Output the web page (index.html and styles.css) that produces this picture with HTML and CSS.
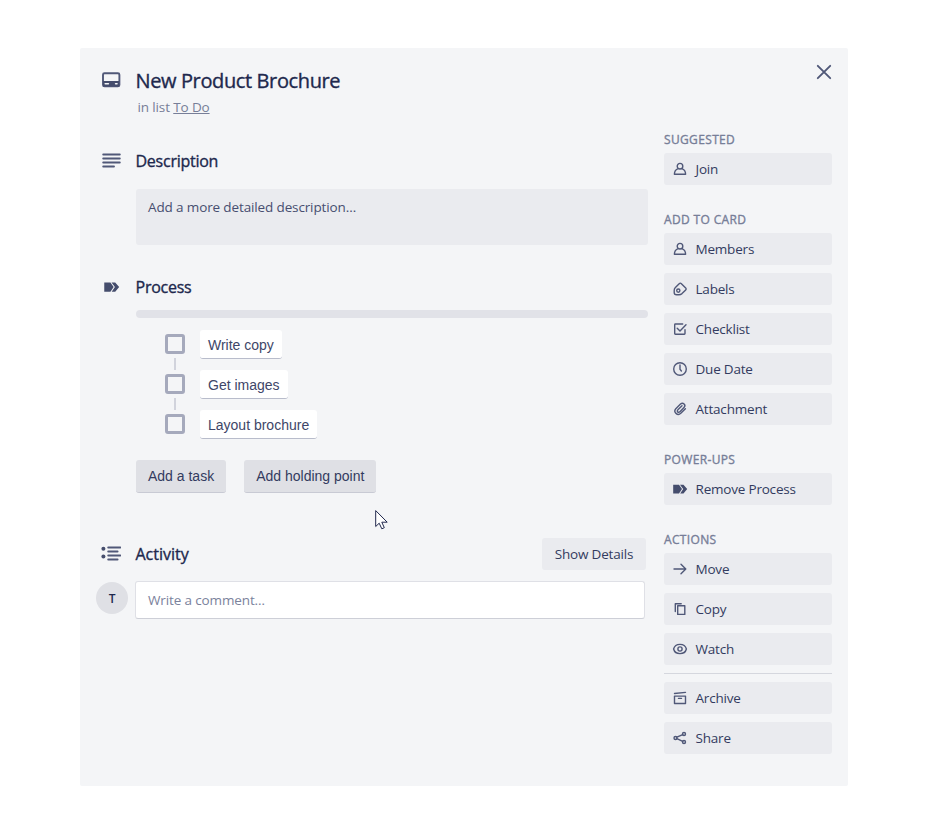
FILE: index.html
```html
<!DOCTYPE html>
<html lang="en">
<head>
  <meta charset="UTF-8">
  <meta name="viewport" content="width=device-width, initial-scale=1.0">
  <title>New Product Brochure</title>
  <link rel="stylesheet" href="styles.css">
</head>
<body>
  <!-- shared icons -->
  <svg class="sprite" width="0" height="0">
    <symbol id="person" viewBox="0 0 16 16">
      <circle cx="8" cy="5.2" r="2.8"/>
      <path d="M6.2 7.6C3.6 8.5 2.4 10.3 2.4 13.3H13.6C13.6 10.3 12.4 8.5 9.8 7.6"/>
    </symbol>
    <symbol id="process" viewBox="0 0 16 16">
      <path class="solid" d="M1.2 3.8H7L10 8L7 12.4H1.2Z"/>
      <path class="solid" d="M8 3.8H11.5L15.2 8L11.5 12.4H8.2L11.2 8Z"/>
    </symbol>
  </svg>

  <div class="card">
    <main class="main">
      <header class="row title-row">
        <svg class="icon" viewBox="0 0 20 20"><rect x="2" y="3.2" width="16.4" height="13.2" rx="1.5"/><path class="solid" d="M2 11H18V16.4H2Z"/><path class="light" d="M4.2 13.8H7.4M14.6 13.8H16"/></svg>
        <div>
          <h1>New Product Brochure</h1>
          <p class="in-list">in list <a>To Do</a></p>
        </div>
      </header>

      <section class="description">
        <div class="row">
          <svg class="icon" viewBox="0 0 20 20"><path d="M2.2 3.5H18.8M2.2 7.5H18.8M2.2 11.5H18.8M2.2 15.5H13"/></svg>
          <h2>Description</h2>
        </div>
        <div class="desc-box">Add a more detailed description…</div>
      </section>

      <section class="process">
        <div class="row">
          <svg class="icon process-icon"><use href="#process"/></svg>
          <h2>Process</h2>
        </div>
        <div class="progress"></div>
        <ul class="tasks">
          <li><span class="box"></span><span class="task">Write copy</span></li>
          <li><span class="box"></span><span class="task">Get images</span></li>
          <li><span class="box"></span><span class="task">Layout brochure</span></li>
        </ul>
        <div class="buttons">
          <button class="task-btn">Add a task</button>
          <button class="task-btn">Add holding point</button>
        </div>
      </section>

      <section class="activity">
        <div class="row">
          <svg class="icon" viewBox="0 0 20 20"><circle class="solid" cx="2.4" cy="4.7" r="2"/><circle class="solid" cx="2.4" cy="12.5" r="2"/><path d="M7.2 3.5H19.4M7.2 7.5H16.6M7.2 11.5H19.4M7.2 15.5H16.6"/></svg>
          <h2>Activity</h2>
          <button class="details">Show Details</button>
        </div>
        <div class="comment-row">
          <span class="avatar">T</span>
          <div class="comment">Write a comment…</div>
        </div>
      </section>
    </main>

    <aside class="side">
      <svg class="close" viewBox="0 0 16 16"><path d="M1.8 1.8L14.2 14.2M14.2 1.8L1.8 14.2"/></svg>

      <h3>SUGGESTED</h3>
      <a class="btn"><svg viewBox="0 0 16 16"><use href="#person"/></svg><span>Join</span></a>

      <h3>ADD TO CARD</h3>
      <a class="btn"><svg viewBox="0 0 16 16"><use href="#person"/></svg><span>Members</span></a>
      <a class="btn"><svg viewBox="0 0 16 16"><path d="M7.2 2.7Q8.3 1.6 9.4 2.7L13.7 6.9Q14.7 8 13.7 9L10 12.6Q8.6 13.7 7 13.7H4.6Q2.2 13.7 2.2 11.4V9.5Q2.2 7.8 3.4 6.6Z"/><circle cx="6.3" cy="9.6" r="1.6"/></svg><span>Labels</span></a>
      <a class="btn"><svg viewBox="0 0 16 16"><path d="M10.7 3H3.4Q2.7 3 2.7 3.7V12.6Q2.7 13.3 3.4 13.3H12.3Q13 13.3 13 12.6V8.6M5.2 7.2L8 10L14 3.8"/></svg><span>Checklist</span></a>
      <a class="btn"><svg viewBox="0 0 16 16"><circle cx="8" cy="8" r="6.3"/><path d="M8 4V8.3L9.4 10"/></svg><span>Due Date</span></a>
      <a class="btn"><svg viewBox="0 0 16 16"><path d="M13.4 7.7L8.8 12.3C5.6 15.2 .9 11.1 3.8 7.7L8.5 3.1C11 .8 14.4 4.1 12 6.6L7.9 10.7C6.3 12.3 4.3 10.3 5.9 8.7L10 4.8"/></svg><span>Attachment</span></a>

      <h3>POWER-UPS</h3>
      <a class="btn"><svg viewBox="0 0 16 16"><use href="#process"/></svg><span>Remove Process</span></a>

      <h3>ACTIONS</h3>
      <a class="btn"><svg viewBox="0 0 16 16"><path d="M2 8H13.8M9 3.2L13.8 8L9 12.8"/></svg><span>Move</span></a>
      <a class="btn"><svg viewBox="0 0 16 16"><path d="M3.3 10.6V2.7H9.2M5.7 4.8H12.8V13.4H5.7Z"/></svg><span>Copy</span></a>
      <a class="btn"><svg viewBox="0 0 16 16"><path d="M1.6 8C3.2 1.8 12.8 1.8 14.4 8C12.8 14.2 3.2 14.2 1.6 8Z"/><circle cx="8" cy="8" r="2.1"/></svg><span>Watch</span></a>
      <hr>
      <a class="btn"><svg viewBox="0 0 16 16"><path d="M2.5 6.1H13.5V13.5H2.5ZM2.5 3.5L13.5 2.4M6.5 8.4H9.5"/></svg><span>Archive</span></a>
      <a class="btn"><svg viewBox="0 0 16 16"><path d="M4.9 7.2L10.7 4.6M4.9 8.7L10.7 11.4"/><circle cx="3.5" cy="8" r="1.5"/><circle cx="12" cy="4" r="1.5"/><circle cx="12" cy="12" r="1.5"/></svg><span>Share</span></a>
    </aside>

    <svg class="cursor" viewBox="0 0 13 20"><path d="M.7 1V16.5L4.2 13.2L6.8 18.8L9.3 17.7L6.8 12.2H11.8Z"/></svg>
  </div>
</body>
</html>
```

FILE: styles.css
```css
* {
  box-sizing: border-box;
}
body {
  margin: 0;
  padding: 48px 79px 0 80px;
  background: #fff;
  color: #20284d;
  font-family: "Open Sans", "Noto Sans", sans-serif;
  font-size: 13.5px;
  line-height: 20px;
  letter-spacing: -0.13px;
}
h1, h2, h3, p, ul {
  margin: 0;
  padding: 0;
}
/* slightly heavier than regular */
h1, h2, h3 {
  font-weight: 400;
  -webkit-text-stroke: 0.35px currentColor;
}
button {
  border: 0;
  padding: 0;
  color: #333b60;
}
svg {
  flex: none;
  fill: none;
  stroke: #505878;
  stroke-linecap: round;
  stroke-linejoin: round;
}
.sprite {
  position: absolute;
}
.solid {
  fill: #454d6d;
  stroke: none;
}
.light {
  stroke: #f4f5f7;
  stroke-width: 1.6;
}
.card {
  position: relative;
  display: flex;
  gap: 16px;
  width: 768px;
  height: 738px;
  background: #f4f5f7;
  border-radius: 2px;
}
.main {
  width: 568px;
  padding-left: 16px;
}
.row {
  display: flex;
  align-items: center;
  height: 32px;
}
.icon {
  width: 20px;
  height: 20px;
  margin: 0 14.5px 0 5px;
  stroke-width: 1.9;
}
.process-icon {
  width: 17px;
  margin: 0 15.5px 0 7px;
}

/* title */
.title-row {
  height: auto;
  align-items: flex-start;
  padding-top: 19px;
}
.title-row .icon {
  margin-top: 3px;
}
h1 {
  font-size: 20px;
  line-height: 28px;
  letter-spacing: -0.38px;
}
.in-list {
  padding: 2px 0 0 2px;
  color: #777e98;
}
.in-list a {
  text-decoration: underline;
}
h2 {
  font-size: 16px;
  line-height: 20px;
  letter-spacing: -0.25px;
}

/* description */
.description {
  margin-top: 28px;
}
.desc-box {
  height: 56px;
  margin: 12px 0 0 40px;
  padding: 8px 12px;
  background: #eaebef;
  border-radius: 3px;
  color: #474e70;
}

/* process */
.process {
  margin-top: 26px;
}
.progress {
  height: 8px;
  margin: 7px 0 0 40px;
  border-radius: 4px;
  background: #e1e2e8;
}
.tasks {
  display: grid;
  gap: 11px;
  margin: 12px 0 0 69px;
  list-style: none;
  letter-spacing: 0;
}
.tasks li {
  position: relative;
  display: flex;
  gap: 15px;
  height: 29px;
}
.box {
  width: 20px;
  height: 20px;
  margin-top: 4px;
  border: 3px solid #a5a9bc;
  border-radius: 3px;
}
.tasks li + li::before {
  content: "";
  position: absolute;
  left: 9px;
  top: -12px;
  width: 2px;
  height: 12px;
  background: #d1d3dc;
}
.task {
  padding: 1px 8px 0;
  background: #fff;
  border-radius: 3px;
  border-bottom: 1px solid #b8bccb;
  color: #3e4668;
  font: 14px/28px "Liberation Sans", Arial, sans-serif;
}
.buttons {
  display: flex;
  gap: 18px;
  margin: 21px 0 0 40px;
}
.task-btn {
  height: 33px;
  padding: 0 12px;
  background: #dfe0e5;
  border-bottom: 1px solid #c8cad4;
  border-radius: 3px;
  font: 14px/32px "Liberation Sans", Arial, sans-serif;
}

/* activity */
.activity {
  margin-top: 45px;
}
.activity .row {
  padding-right: 2px;
}
.activity h2 {
  letter-spacing: 0;
}
.details {
  width: 104px;
  height: 32px;
  margin-left: auto;
  background: #eaebef;
  border-radius: 3px;
  font: 13.5px/20px "Open Sans", sans-serif;
  letter-spacing: -0.18px;
}
.comment-row {
  display: flex;
  gap: 7px;
  margin-top: 11px;
}
.avatar {
  width: 32px;
  height: 32px;
  margin-top: 1px;
  border-radius: 50%;
  background: #dfe0e5;
  font-size: 12px;
  line-height: 33px;
  font-weight: 600;
  text-align: center;
}
.comment {
  width: 510px;
  height: 38px;
  padding: 8px 12px;
  background: #fff;
  border: 1px solid #dfe0e6;
  border-bottom-color: #cdcfd7;
  border-radius: 3px;
  color: #7b829c;
}

/* sidebar */
.side {
  display: flex;
  flex-direction: column;
  width: 168px;
}
.close {
  align-self: flex-end;
  width: 16px;
  height: 16px;
  margin: 15.5px 0.5px 50.5px 0;
  stroke-width: 1.9;
}
h3 {
  margin-bottom: 3px;
  color: #777e98;
  font-size: 12px;
  line-height: 20px;
  letter-spacing: 0.35px;
}
.btn + h3 {
  margin-top: 17px;
}
.btn {
  display: flex;
  align-items: center;
  gap: 7.5px;
  height: 32px;
  margin-bottom: 8px;
  padding: 0 8px;
  background: #eaebef;
  border-radius: 3px;
  color: #333b60;
  letter-spacing: -0.2px;
}
.btn svg {
  width: 16px;
  height: 16px;
  stroke-width: 1.4;
}
hr {
  width: 100%;
  height: 1px;
  margin: 0 0 8px;
  border: 0;
  background: #d5d7de;
}

.cursor {
  position: absolute;
  left: 295px;
  top: 462px;
  width: 13px;
  height: 20px;
  fill: #fff;
  stroke: #20284d;
  stroke-linejoin: miter;
}
```
